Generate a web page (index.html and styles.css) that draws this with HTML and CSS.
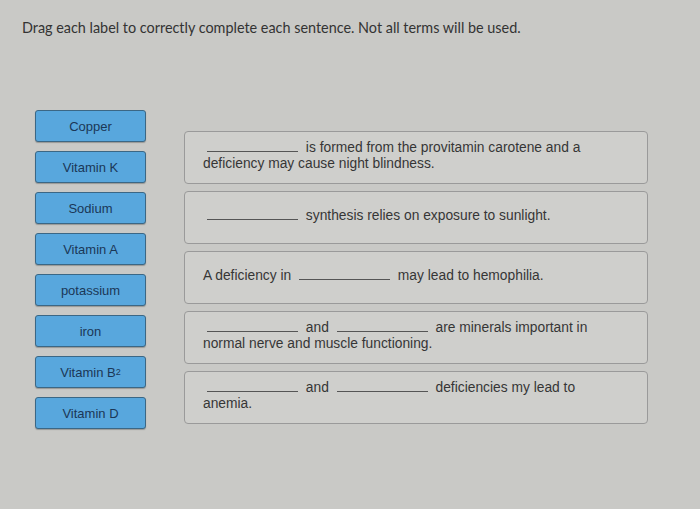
FILE: index.html
```html
<!DOCTYPE html>
<html lang="en">
<head>
    <meta charset="UTF-8">
    <meta name="viewport" content="width=device-width, initial-scale=1.0">
    <title>Vitamins and minerals - labeling</title>

    <link rel="stylesheet" href="styles.css">

</head>
<body>
    <div class="page">
        <p class="prompt">Drag each label to correctly complete each sentence. Not all terms will be used.</p>

        <div class="board">
            <!-- draggable terms -->
            <div class="labels">
                <div class="label">Copper</div>
                <div class="label">Vitamin K</div>
                <div class="label">Sodium</div>
                <div class="label">Vitamin A</div>
                <div class="label">potassium</div>
                <div class="label">iron</div>
                <div class="label">Vitamin B<sub>2</sub></div>
                <div class="label">Vitamin D</div>
            </div>

            <!-- sentences with drop targets -->
            <div class="sentences">
                <div class="sentence">
                    <p><span class="blank"></span> is formed from the provitamin carotene and a deficiency may cause night blindness.</p>
                </div>
                <div class="sentence">
                    <p><span class="blank"></span> synthesis relies on exposure to sunlight.</p>
                </div>
                <div class="sentence">
                    <p>A deficiency in <span class="blank"></span> may lead to hemophilia.</p>
                </div>
                <div class="sentence">
                    <p><span class="blank"></span> and <span class="blank"></span> are minerals important in normal nerve and muscle functioning.</p>
                </div>
                <div class="sentence">
                    <p><span class="blank"></span> and <span class="blank"></span> deficiencies my lead to anemia.</p>
                </div>
            </div>
        </div>
    </div>
</body>
</html>
```

FILE: styles.css
```css
*{
    margin: 0;
    padding: 0;
    box-sizing: border-box;
}

body{
    background: #c9c9c6;
    color: #333;
    font-family: "Liberation Sans", Arial, sans-serif;
}

.page{
    padding: 19px 22px;
}

.prompt{
    font-family: Lato, "Liberation Sans", sans-serif;
    font-size: 14.4px;
    line-height: 17px;
    color: #333;
}

.board{
    display: flex;
    gap: 38px;
    margin-top: 74px;
    padding-left: 13px;
}

.labels{
    display: flex;
    flex-direction: column;
    gap: 9px;
    width: 111px;
}

.label{
    height: 32px;
    display: flex;
    align-items: center;
    justify-content: center;
    background: #58a7dd;
    border: 1px solid #3b6785;
    border-radius: 3px;
    box-shadow: 0 1px 1px rgba(0, 0, 0, .25);
    color: #1b3757;
    font-size: 13px;
}

.label sub{
    font-size: 9px;
    vertical-align: -1px;
}

.sentences{
    display: flex;
    flex-direction: column;
    gap: 7px;
    margin-top: 21px;
    width: 464px;
}

.sentence{
    min-height: 53px;
    display: flex;
    align-items: center;
    padding: 4px 40px 8px 18px;
    background: #cfcfcc;
    border: 1px solid #9a9a9a;
    border-radius: 4px;
    font-size: 13.8px;
    line-height: 16px;
    color: #363636;
}

.blank{
    display: inline-block;
    width: 91px;
    height: 12px;
    margin: 0 4px;
    border-bottom: 1px solid #555;
}
```
